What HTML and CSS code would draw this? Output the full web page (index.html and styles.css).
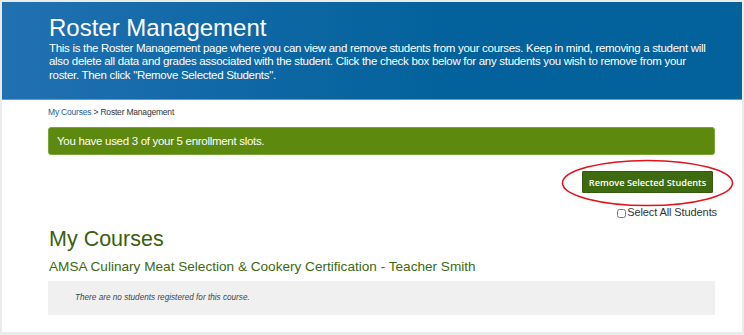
FILE: index.html
```html
<!DOCTYPE html>
<html>
<head>
<meta charset="utf-8">
<link rel="stylesheet" href="styles.css">
</head>
<body>
<div class="frame">
  <header class="hero">
    <h1 class="hero-title">Roster Management</h1>
    <p class="hero-text">This is the Roster Management page where you can view and remove students from your courses. Keep in mind, removing a student will also delete all data and grades associated with the student. Click the check box below for any students you wish to remove from your roster. Then click "Remove Selected Students".</p>
  </header>
  <main class="content">
    <div class="crumbs"><a class="crumb-link" href="#">My Courses</a> &gt; Roster Management</div>
    <div class="alert">You have used 3 of your 5 enrollment slots.</div>
    <div class="actions">
      <div class="btn-wrap">
        <button class="btn">Remove Selected Students</button>
        <svg class="ring" width="173" height="48" viewBox="0 0 173 48"><ellipse cx="86.5" cy="24" rx="85" ry="22.5" fill="none" stroke="#e0141b" stroke-width="1.6"/></svg>
      </div>
      <label class="select-all"><input type="checkbox" class="cb">Select All Students</label>
    </div>
    <h2 class="section-title">My Courses</h2>
    <h3 class="course-title">AMSA Culinary Meat Selection &amp; Cookery Certification - Teacher Smith</h3>
    <div class="empty">There are no students registered for this course.</div>
  </main>
</div>
</body>
</html>
```
FILE: styles.css
```css
html, body {
  margin: 0;
  padding: 0;
}
body {
  background: #ebebeb;
  font-family: "Liberation Sans", Arial, sans-serif;
  width: 744px;
  height: 335px;
  overflow: hidden;
}
.frame {
  margin: 2px 2px 0 2px;
  background: #fff;
  height: 330px;
}
.hero {
  height: 98px;
  box-sizing: border-box;
  background: linear-gradient(90deg, #2171b2 0%, #0e67a4 35%, #03629b 60%, #03629b 100%);
  border-bottom: 1px solid #5e9fd0;
  padding: 12px 30px 0 47px;
  color: #fff;
}
.hero-title {
  margin: 0;
  font-size: 24px;
  font-weight: normal;
  line-height: 28px;
}
.hero-text {
  margin: 0;
  font-size: 11.5px;
  letter-spacing: -0.3px;
  line-height: 13.4px;
  width: 665px;
}
.content {
  padding: 6px 27px 0 46px;
}
.crumbs {
  font-size: 8.5px;
  letter-spacing: -0.2px;
  color: #333;
  line-height: 12px;
}
.crumb-link {
  color: #1a5d9a;
  text-decoration: none;
}
.alert {
  margin-top: 9px;
  height: 28px;
  box-sizing: border-box;
  background: #5c890e;
  border: 1px solid #7aa33a;
  border-radius: 3px;
  color: #fff;
  font-size: 11.5px;
  letter-spacing: -0.3px;
  line-height: 26px;
  padding-left: 8px;
}
.actions {
  display: flex;
  flex-direction: column;
  align-items: flex-end;
  margin-top: 16px;
}
.btn-wrap {
  position: relative;
  margin-right: 2px;
}
.btn {
  display: block;
  height: 22px;
  width: 131px;
  background: #3f6b10;
  border: 1px solid #35590d;
  color: #fff;
  font-family: "Open Sans", sans-serif;
  font-weight: 600;
  font-size: 9.2px;
  padding: 0;
  border-radius: 1px;
}
.ring {
  position: absolute;
  left: -21px;
  top: -12px;
  pointer-events: none;
}
.select-all {
  margin-top: 13px;
  margin-right: -2px;
  font-size: 11px;
  letter-spacing: -0.1px;
  color: #333;
  line-height: 12px;
  display: flex;
  align-items: center;
}
.cb {
  margin: 2px 1px 0 0;
  width: 9px;
  height: 9px;
}
.section-title {
  margin: 8px 0 0 1px;
  font-size: 21.5px;
  font-weight: normal;
  color: #3b5f0c;
  line-height: 26px;
}
.course-title {
  margin: 6px 0 0 1px;
  font-size: 13.6px;
  font-weight: normal;
  color: #3d6a0f;
  line-height: 18px;
}
.empty {
  margin-top: 5px;
  height: 34px;
  background: #f0f0f0;
  font-size: 8.2px;
  font-style: italic;
  color: #444;
  line-height: 34px;
  padding-left: 27px;
}
```
